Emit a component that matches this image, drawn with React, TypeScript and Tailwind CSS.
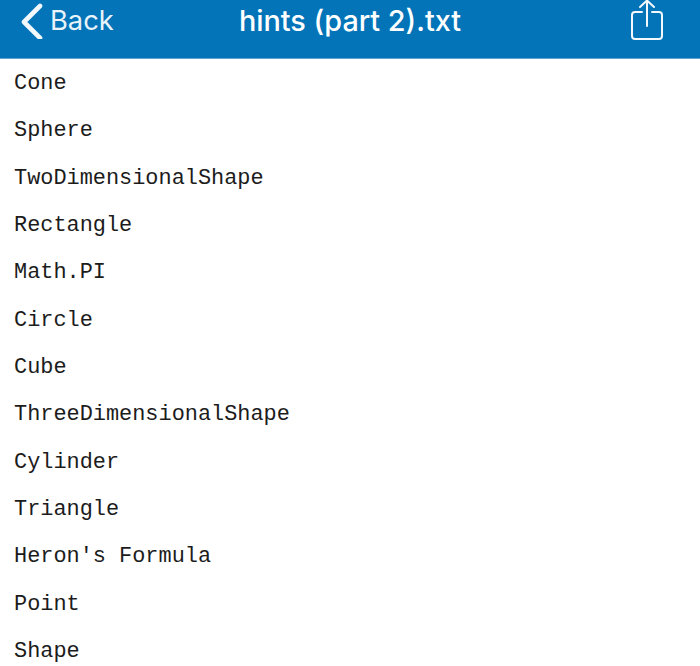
const hints = [
  "Cone",
  "Sphere",
  "TwoDimensionalShape",
  "Rectangle",
  "Math.PI",
  "Circle",
  "Cube",
  "ThreeDimensionalShape",
  "Cylinder",
  "Triangle",
  "Heron's Formula",
  "Point",
  "Shape",
];

export default function App() {
  return (
    <div className="h-[666px] w-[700px] overflow-hidden bg-white">
      <header className="grid h-[59px] grid-cols-[1fr_auto_1fr] items-center border-b border-[#5fa3d2] bg-[#0474b9] px-5 pb-4 text-white [font-family:Inter,sans-serif]">
        <div className="flex items-center gap-[6px]">
          <svg width="24" height="36" viewBox="0 0 24 36" fill="none" className="shrink-0">
            <path d="M20 3 L4 19 L20 35" stroke="#f2f8fc" strokeWidth="4.6" strokeLinecap="round" strokeLinejoin="round" />
          </svg>
          <span className="text-[27.3px] leading-none text-[#e8f3fa]">Back</span>
        </div>
        <h1 className="text-[28.8px] font-medium leading-none">hints (part 2).txt</h1>
        <svg width="34" height="42" viewBox="0 0 34 42" fill="none" className="mr-4 shrink-0 justify-self-end" stroke="#f2f8fc" strokeWidth="2" strokeLinecap="round" strokeLinejoin="round">
          <path d="M12 12 H5 Q2 12 2 15 V36 Q2 39 5 39 H29 Q32 39 32 36 V15 Q32 12 29 12 H22" />
          <path d="M17 26 V1" />
          <path d="M10 7 L17 0.5 L24 7" />
        </svg>
      </header>
      <ul className="px-[14px] pt-[1px] text-[21.9px] leading-[47.33px] text-[#1c1c1c] [font-family:'Liberation_Mono',monospace]">
        {hints.map((hint) => (
          <li key={hint} className="whitespace-pre">
            {hint}
          </li>
        ))}
      </ul>
    </div>
  );
}
